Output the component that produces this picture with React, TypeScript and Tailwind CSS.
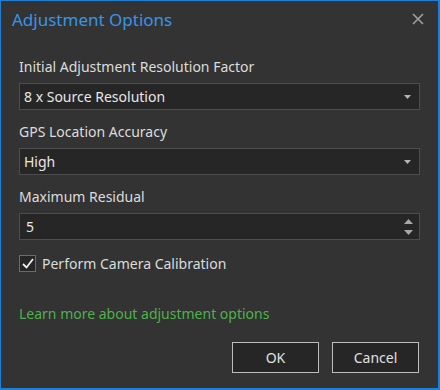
import { useState } from 'react';

const font = { fontFamily: '"Segoe UI", "Noto Sans", "Open Sans", sans-serif' };

const Caret = () => (
  <svg width="7" height="4" viewBox="0 0 7 4" className="fill-[#b4b4b4]">
    <path d="M0 0h7L3.5 4z" />
  </svg>
);

const Select = ({ value }: { value: string }) => (
  <div className="flex h-[27px] items-center justify-between border border-[#4d4d4d] bg-[#262626] pl-[4px] pr-[8px]">
    <span className="text-[14px] text-[#e6e6e6]">{value}</span>
    <Caret />
  </div>
);

export default function App() {
  const [calibrate, setCalibrate] = useState(true);

  return (
    <div
      className="flex h-[390px] w-[440px] flex-col border-t border-l border-r-2 border-b-2 border-[#1e7fd6] bg-[#333333] text-[#dcdcdc]"
      style={font}
    >
      <div className="flex h-[36px] items-center justify-between pl-[11px] pr-[14px]">
        <h1 className="text-[17px] leading-none text-[#3895e8]">Adjustment Options</h1>
        <button className="text-[#9a9a9a]">
          <svg width="12" height="12" viewBox="0 0 12 12" className="stroke-[#a0a0a0]" strokeWidth="1.6">
            <path d="M1 1l10 10M11 1L1 11" />
          </svg>
        </button>
      </div>

      <div className="flex flex-1 flex-col px-[18px]">
        <label className="mt-[20px] block h-[20px] text-[14px] leading-[20px]">
          Initial Adjustment Resolution Factor
        </label>
        <div className="mt-[6px]">
          <Select value="8 x Source Resolution" />
        </div>

        <label className="mt-[12px] block h-[20px] text-[14px] leading-[20px]">GPS Location Accuracy</label>
        <div className="mt-[6px]">
          <Select value="High" />
        </div>

        <label className="mt-[12px] block h-[20px] text-[14px] leading-[20px]">Maximum Residual</label>
        <div className="mt-[6px] flex h-[27px] items-center justify-between border border-[#4d4d4d] bg-[#262626] pl-[6px] pr-[6px]">
          <span className="text-[14px] text-[#e6e6e6]">5</span>
          <div className="flex flex-col gap-[6px]">
            <svg width="9" height="5" viewBox="0 0 9 5" className="fill-[#a8a8a8]">
              <path d="M0 5h9L4.5 0z" />
            </svg>
            <svg width="9" height="5" viewBox="0 0 9 5" className="fill-[#a8a8a8]">
              <path d="M0 0h9L4.5 5z" />
            </svg>
          </div>
        </div>

        <label
          className="mt-[14px] flex h-[18px] cursor-pointer items-center gap-[6px] text-[14px]"
          onClick={() => setCalibrate(!calibrate)}
        >
          <span className="flex h-[17px] w-[17px] items-center justify-center border border-[#6b6b6b] bg-[#262626]">
            {calibrate && (
              <svg width="12" height="11" viewBox="0 0 12 11" fill="none" className="stroke-[#f0f0f0]" strokeWidth="1.8">
                <path d="M1 6l3.5 3.5L11 1" />
              </svg>
            )}
          </span>
          <span>Perform Camera Calibration</span>
        </label>

        <a className="mt-[32px] block text-[14px] leading-[20px] text-[#4db24a]">Learn more about adjustment options</a>

        <div className="mt-[18px] flex justify-end gap-[13px] pr-[1px]">
          <button className="h-[31px] w-[87px] border border-[#bdbdbd] bg-[#262626] text-[14px] text-[#e0e0e0]">
            OK
          </button>
          <button className="h-[31px] w-[87px] border border-[#bdbdbd] bg-[#262626] text-[14px] text-[#e0e0e0]">
            Cancel
          </button>
        </div>
      </div>
    </div>
  );
}
